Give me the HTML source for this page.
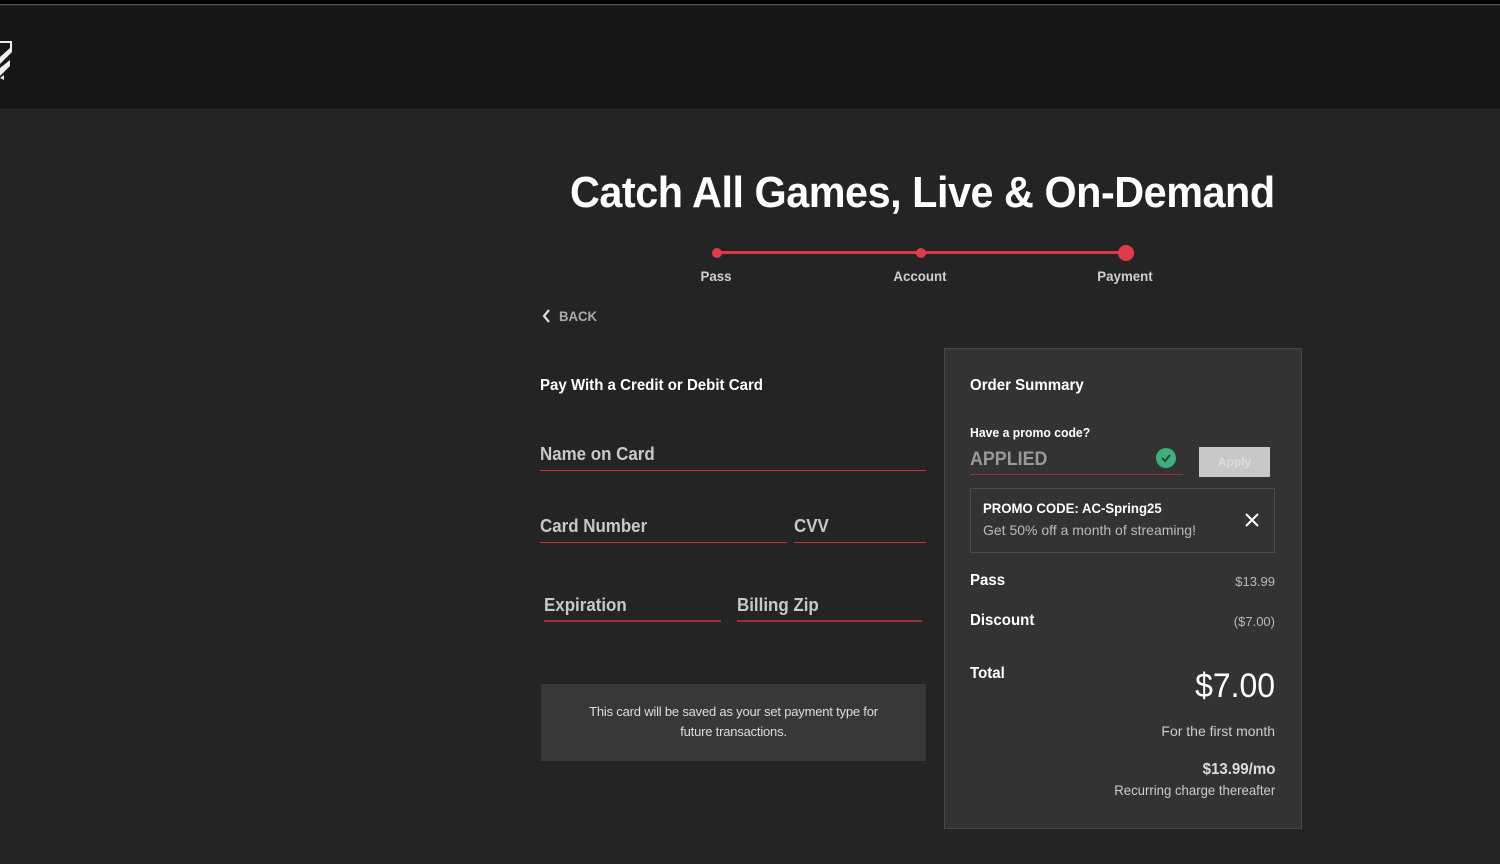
<!DOCTYPE html>
<html><head><style>
*{box-sizing:border-box;margin:0;padding:0}
body{width:1500px;height:864px;background:#242424;font-family:"Liberation Sans",Arial,sans-serif;color:#fff;position:relative;overflow:hidden}
.top{position:absolute;left:0;top:0;width:1500px;height:5px;background:#000;border-bottom:1px solid #555}
.hdr{position:absolute;left:0;top:6px;width:1500px;height:103px;background:#171717}
.a{position:absolute;white-space:nowrap}
.c{transform:scaleX(0.94);transform-origin:left}
.r{transform:scaleX(0.94);transform-origin:right}
h1{position:absolute;left:570px;top:168px;font-size:44px;font-weight:bold;letter-spacing:-0.5px;transform:scaleX(0.94);transform-origin:left}
.line{position:absolute;top:251px;height:3px;background:#d83a46}
.dot{position:absolute;border-radius:50%;background:#e03b48}
.step{position:absolute;top:268px;font-size:14px;font-weight:bold;color:#cfcfcf;transform:translateX(-50%) scaleX(0.95)}
.lbl{font-size:18px;font-weight:bold;color:#c8c8c8}
.ul{position:absolute;height:1px;background:#c8303c}
.card{position:absolute;left:944px;top:348px;width:358px;height:481px;background:#333;border:1px solid #484848}
</style></head><body>
<div class="top"></div>
<div class="hdr">
<svg class="a" style="left:0;top:34px" width="14" height="42" viewBox="0 0 14 42"><path d="M0 1H12V12L0 24V17L10 8V3H0Z" fill="#eee"/><path d="M0 28L10 20V26L0 36Z" fill="#eee"/><path d="M0 38L4 35V40Z" fill="#eee"/></svg>
</div>
<h1>Catch All Games, Live &amp; On-Demand</h1>
<div class="line" style="left:717px;width:409px"></div>
<div class="dot" style="left:712px;top:248px;width:10px;height:10px"></div>
<div class="dot" style="left:916px;top:248px;width:10px;height:10px"></div>
<div class="dot" style="left:1118px;top:245px;width:16px;height:16px"></div>
<div class="step" style="left:716px">Pass</div>
<div class="step" style="left:920px">Account</div>
<div class="step" style="left:1125px">Payment</div>
<svg class="a" style="left:542px;top:309px" width="10" height="14" viewBox="0 0 10 14"><path d="M7 1L2 7L7 13" stroke="#ddd" stroke-width="2.2" fill="none"/></svg>
<div class="a c" style="left:559px;top:308px;font-size:14px;font-weight:bold;color:#aaa">BACK</div>
<div class="a c" style="left:540px;top:377px;font-size:16px;font-weight:bold">Pay With a Credit or Debit Card</div>
<div class="a lbl c" style="left:540px;top:444px">Name on Card</div><div class="ul" style="left:540px;top:470px;width:386px"></div>
<div class="a lbl c" style="left:540px;top:516px">Card Number</div><div class="ul" style="left:540px;top:542px;width:247px"></div>
<div class="a lbl c" style="left:794px;top:516px">CVV</div><div class="ul" style="left:794px;top:542px;width:132px"></div>
<div class="a lbl c" style="left:544px;top:595px">Expiration</div><div class="ul" style="left:544px;top:620px;width:177px;height:2px;background:#a0303a"></div>
<div class="a lbl c" style="left:737px;top:595px">Billing Zip</div><div class="ul" style="left:737px;top:620px;width:185px;height:2px;background:#a0303a"></div>
<div class="a" style="left:541px;top:684px;width:385px;height:77px;background:#383838;text-align:center;font-size:13px;line-height:20px;color:#ddd;padding-top:18px;white-space:normal;letter-spacing:-0.2px">This card will be saved as your set payment type for<br>future transactions.</div>
<div class="card"></div>
<div class="a c" style="left:970px;top:377px;font-size:16px;font-weight:bold">Order Summary</div>
<div class="a c" style="left:970px;top:425px;font-size:13px;font-weight:bold">Have a promo code?</div>
<div class="a c" style="left:970px;top:449px;font-size:19px;font-weight:bold;color:#999">APPLIED</div>
<div class="ul" style="left:970px;top:474px;width:213px;background:#9a3038"></div>
<div class="a" style="left:1156px;top:448px;width:20px;height:20px;border-radius:50%;background:#3daf7a"><svg width="20" height="20" viewBox="0 0 20 20"><path d="M6 10L9 13L14 7" stroke="#1d4c36" stroke-width="2" fill="none"/></svg></div>
<div class="a" style="left:1199px;top:447px;width:71px;height:30px;background:#c8c8c8;color:#ddd;font-size:12px;font-weight:bold;text-align:center;line-height:30px">Apply</div>
<div class="a" style="left:970px;top:488px;width:305px;height:65px;border:1px solid #4a4a4a"></div>
<div class="a c" style="left:983px;top:500px;font-size:14px;font-weight:bold">PROMO CODE: AC-Spring25</div>
<div class="a" style="left:983px;top:522px;font-size:14px;color:#bbb">Get 50% off a month of streaming!</div>
<svg class="a" style="left:1245px;top:513px" width="14" height="14" viewBox="0 0 14 14"><path d="M1 1L13 13M13 1L1 13" stroke="#fff" stroke-width="2"/></svg>
<div class="a c" style="left:970px;top:572px;font-size:16px;font-weight:bold">Pass</div>
<div class="a" style="right:225px;top:574px;font-size:13px;color:#bbb">$13.99</div>
<div class="a c" style="left:970px;top:612px;font-size:16px;font-weight:bold">Discount</div>
<div class="a" style="right:225px;top:614px;font-size:13px;color:#bbb">($7.00)</div>
<div class="a c" style="left:970px;top:665px;font-size:16px;font-weight:bold">Total</div>
<div class="a r" style="right:225px;top:667px;font-size:34px">$7.00</div>
<div class="a" style="right:225px;top:723px;font-size:14px;color:#ccc">For the first month</div>
<div class="a r" style="right:225px;top:761px;font-size:16px;font-weight:bold;color:#ddd">$13.99/mo</div>
<div class="a r" style="right:225px;top:782px;font-size:14px;color:#ccc">Recurring charge thereafter</div>
</body></html>
